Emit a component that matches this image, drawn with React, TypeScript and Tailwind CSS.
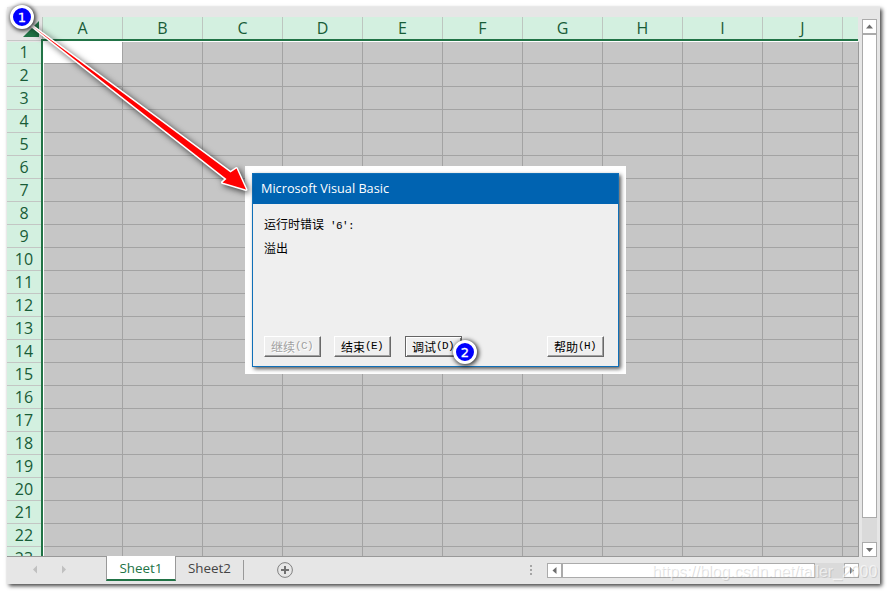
import type { ReactNode } from "react";

const columns = ["A", "B", "C", "D", "E", "F", "G", "H", "I", "J"];
const rows = Array.from({ length: 23 }, (_, i) => i + 1);

function ColumnHeaders() {
  return (
    <div className="flex h-[25px] shrink-0">
      <div className="flex h-6 w-[34px] items-end justify-end border-b border-[#c6c6c6] pb-[3px] pr-[2px]">
        <svg width="16" height="16" className="block">
          <path d="M16 0V16H0Z" fill="#217346" />
        </svg>
      </div>
      <div className="flex h-[25px] w-[2px] flex-col">
        <div className="h-[22px] border-r border-[#bdc6c0]" />
        <div className="h-[3px] bg-[#217346]" />
      </div>
      <div className="flex h-[25px] w-[815px] overflow-hidden border-b border-white">
        <div className="flex h-6 w-full border-b-2 border-[#217346] bg-[#d3f0e0] text-[16px] leading-[23px] text-[#185c37]">
          {columns.map((c) => (
            <div
              key={c}
              className="w-[80px] shrink-0 border-r border-[#bdc6c0] text-center"
            >
              {c}
            </div>
          ))}
        </div>
      </div>
    </div>
  );
}

function Grid() {
  return (
    <div className="flex h-[515px] flex-col overflow-hidden border-b border-[#999]">
      {rows.map((r) => (
        <div key={r} className={r === 1 ? "flex h-[22px] shrink-0" : "flex h-[23px] shrink-0"}>
          <div
            className={
              (r === 1 ? "leading-[21px] " : "leading-[23px] ") +
              "w-[34px] shrink-0 border-b border-[#c3c6c4] bg-[#d3f0e0] text-center text-[16px] text-[#185c37]"
            }
          >
            {r}
          </div>
          <div className="w-[3px] shrink-0 border-r border-white bg-[#217346]" />
          <div className="flex w-[815px] shrink-0 overflow-hidden border-r border-[#999]">
            {columns.map((c, i) => (
              <div
                key={c}
                className={
                  (i === 0 ? "w-[79px] " : "w-[80px] ") +
                  (i === 0 && r === 1 ? "bg-white " : "bg-[#c6c6c6] ") +
                  "shrink-0 border-b border-r border-[#a3a3a3]"
                }
              />
            ))}
            <div className="grow border-b border-[#a3a3a3] bg-[#c6c6c6]" />
          </div>
        </div>
      ))}
    </div>
  );
}

function ScrollButton({ path }: { path: string }) {
  return (
    <div className="h-[15px] w-[15px] shrink-0 border border-[#ababab] bg-white">
      <svg width="13" height="13" className="block">
        <path d={path} fill="#6e6e6e" />
      </svg>
    </div>
  );
}

function VerticalScroll() {
  return (
    <div className="ml-[3px] mt-[2px] flex h-[538px] w-[15px] flex-col bg-[#dadada]">
      <ScrollButton path="M3 8.5L6.5 4.5L10 8.5Z" />
      <div className="-mt-px h-[485px] border border-t-2 border-[#ababab] bg-white" />
      <div className="grow" />
      <ScrollButton path="M3 5L6.5 9L10 5Z" />
    </div>
  );
}

function SheetBar() {
  return (
    <div className="flex h-[28px] items-start">
      <svg width="99" height="27" className="block shrink-0">
        <path d="M30 8.5V16.5L26 12.5Z M55 8.5V16.5L59 12.5Z" fill="#c0c0c0" />
      </svg>
      <div className="-mt-px h-[25px] w-[70px] shrink-0 border-x border-b-2 border-x-[#999] border-b-[#217346] bg-white text-center text-[13.4px] leading-[25px] text-[#217346]">
        Sheet1
      </div>
      <div className="mt-[3px] h-5 w-[68px] shrink-0 border-r border-[#999] pl-3 text-[13.4px] leading-[17px] text-[#444]">
        Sheet2
      </div>
      <svg width="16" height="16" className="ml-[33px] mt-[5px] block shrink-0" fill="none">
        <circle cx="8" cy="8" r="7.4" stroke="#808080" />
        <path d="M8 4V12M4 8H12" stroke="#707070" strokeWidth="2" />
      </svg>
      <svg width="2" height="12" className="ml-[237px] mt-[8px] block shrink-0" fill="#a5a5a5">
        <path d="M0 0h2v2H0zM0 4h2v2H0zM0 8h2v2H0z" />
      </svg>
      <div className="ml-[15px] mt-[6px] flex w-[312px] bg-[#dadada]">
        <ScrollButton path="M8.5 3V10L4.5 6.5Z" />
        <div className="h-[15px] w-[253px] border border-[#ababab] bg-white" />
        <div className="grow" />
        <ScrollButton path="M5 3V10L9 6.5Z" />
      </div>
    </div>
  );
}

function DialogButton({ children, kind = "normal" }: { children: ReactNode; kind?: "normal" | "disabled" | "focused" }) {
  const looks = {
    normal: "text-black border-l-white border-t-white border-r-[#696969] border-b-[#696969] shadow-[inset_-1px_-1px_0_#a0a0a0]",
    disabled:
      "text-[#a0a0a0] [text-shadow:1px_1px_0_#fff] border-l-white border-t-white border-r-[#696969] border-b-[#696969] shadow-[inset_-1px_-1px_0_#a0a0a0]",
    focused: "text-black border-[#646464] shadow-[inset_1px_1px_0_#fff,inset_-1px_-1px_0_#808080]",
  };
  return (
    <div
      className={
        "flex h-[21px] w-[57px] items-center justify-center whitespace-pre border bg-[#efefef] pr-px leading-none " +
        looks[kind]
      }
    >
      {children}
    </div>
  );
}

function Mono({ children }: { children: ReactNode }) {
  return <span className="font-['Liberation_Mono',monospace] text-[11px] tracking-[-0.6px]">{children}</span>;
}

function ErrorDialog() {
  return (
    <div className="absolute left-[245px] top-[166px] h-[208px] w-[381px] bg-white pl-[7px] pt-[7px]">
      <div className="flex h-[194px] w-[367px] flex-col border border-[#0f6fb8] bg-[#efefef] shadow-[2px_2px_4px_rgba(0,0,0,0.65)]">
        <div className="h-[30px] shrink-0 bg-[#0063b1] pl-2 text-[12.7px] leading-[29px] text-white">
          Microsoft Visual Basic
        </div>
        <div className="flex grow flex-col pl-[11px] font-['Noto_Sans_CJK_SC',sans-serif] text-[12px] text-black">
          <div className="mt-2 h-6 whitespace-pre leading-6">
            运行时错误<Mono>{" '6':"}</Mono>
          </div>
          <div className="h-6 leading-6">溢出</div>
          <div className="mt-[76px] flex">
            <DialogButton kind="disabled">
              继续<Mono>(C)</Mono>
            </DialogButton>
            <div className="w-[13px]" />
            <DialogButton>
              结束<Mono>(E)</Mono>
            </DialogButton>
            <div className="w-[14px]" />
            <DialogButton kind="focused">
              调试<Mono>(D)</Mono>
            </DialogButton>
            <div className="w-[85px]" />
            <DialogButton>
              帮助<Mono>(H)</Mono>
            </DialogButton>
          </div>
        </div>
      </div>
    </div>
  );
}

function Badge({ n, place }: { n: number; place: string }) {
  return (
    <div
      className={
        "absolute flex h-6 w-6 items-center justify-center rounded-full border-[3px] border-white bg-[#0000fe] font-['DejaVu_Sans',sans-serif] text-[13px] leading-none text-white shadow-[1px_1px_4px_1px_rgba(0,0,0,0.75)] [-webkit-text-stroke:0.3px_#fff] " +
        place
      }
    >
      {n}
    </div>
  );
}

export default function App() {
  return (
    <div className="relative h-[591px] w-[887px] overflow-hidden bg-white pl-[7px] pt-[7px] font-['Open_Sans','Noto_Sans',sans-serif]">
      <div className="flex h-[577px] w-[873px] flex-col bg-[#e6e6e6] pt-[10px] shadow-[2px_2px_4px_rgba(0,0,0,0.75)]">
        <div className="flex h-[540px]">
          <div className="flex w-[852px] flex-col">
            <ColumnHeaders />
            <Grid />
          </div>
          <VerticalScroll />
        </div>
        <SheetBar />
      </div>
      <ErrorDialog />
      <svg
        width="260"
        height="210"
        className="absolute left-0 top-0 drop-shadow-[2px_2px_3px_rgba(0,0,0,0.7)]"
      >
        <path
          d="M32 26L230.5 172.5L236.5 168.5L246 189.5L222.5 182.5L226.5 179Z"
          fill="#f00"
          stroke="#fff"
          strokeWidth="3"
          strokeLinejoin="round"
          paintOrder="stroke"
        />
      </svg>
      <Badge n={1} place="left-[10px] top-[5px]" />
      <Badge n={2} place="left-[453px] top-[340px]" />
      <div className="absolute left-[652px] top-[562px] whitespace-nowrap font-['Liberation_Sans',sans-serif] text-[15.9px] leading-5 text-white/60 [text-shadow:1px_1px_0_rgba(160,160,160,0.35)]">
        https://blog.csdn.net/taller_2000
      </div>
    </div>
  );
}
